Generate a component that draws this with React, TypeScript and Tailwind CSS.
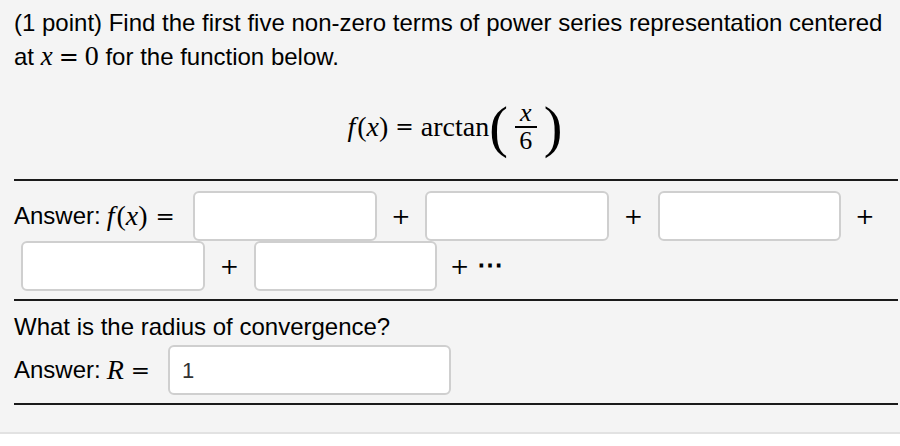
const sans = "font-['Liberation_Sans',Arial,sans-serif]";
const serif = "font-['Liberation_Serif','Times_New_Roman',serif]";
const op = "font-['DejaVu_Serif',serif]";

function Box({ w, value }: { w: string; value?: string }) {
  return (
    <div
      className={`${w} flex h-[50px] items-center rounded-[6px] border-2 border-[#cfcfcf] bg-white px-[12px] text-[22px] text-[#333]`}
    >
      {value}
    </div>
  );
}

function Plus({ w = "w-[48px]" }: { w?: string }) {
  return (
    <span className={`${w} ${op} flex justify-center text-[23px] leading-none`}>+</span>
  );
}

function Rule() {
  return <div className="mr-[2px] h-[2px] bg-[#1a1a1a]" />;
}

export default function App() {
  return (
    <div className={`${sans} w-[900px] bg-white text-black`}>
      <div className="border-b-2 border-[#e2e2e2] bg-[#f4f4f4] pl-[14px]">
        <p className="pt-[6px] text-[24px] leading-[34px]">
          (1 point) Find the first five non-zero terms of power series representation centered
          <br />
          at <i className={`${serif} text-[27px] leading-none`}>x</i>
          <span className={`${op} mx-[6px] text-[24px] leading-none`}>=</span>
          <span className={`${serif} text-[28px] leading-none`}>0</span> for the function below.
        </p>

        <div className={`${serif} flex h-[105px] items-center justify-center pr-[4px] text-[28px]`}>
          <i>f</i>
          <span className="ml-[2px]">(</span>
          <i>x</i>)<span className={`${op} mx-[7px] text-[22px]`}>=</span>arctan
          <span className="flex items-center">
            <span className="text-[56px] font-light leading-none">(</span>
            <span className="mx-[7px] flex flex-col items-center text-[26px] leading-[26px]">
              <i className="px-[2px]">x</i>
              <span className="h-[2px] w-[22px] bg-black" />
              <span>6</span>
            </span>
            <span className="text-[56px] font-light leading-none">)</span>
          </span>
        </div>

        <Rule />

        <div className="pb-[8px] pt-[10px] text-[24px]">
          <div className="flex items-center">
            <span className="w-[179px] flex items-center">
              Answer:
              <span className={`${serif} ml-[6px] text-[28px]`}>
                <i>f</i>
                <span className="ml-[2px]">(</span>
                <i>x</i>)
              </span>
              <span className={`${op} ml-[8px] text-[23px]`}>=</span>
            </span>
            <Box w="w-[184px]" />
            <Plus />
            <Box w="w-[184px]" />
            <Plus w="w-[49px]" />
            <Box w="w-[183px]" />
            <Plus />
          </div>
          <div className="ml-[7px] flex items-center">
            <Box w="w-[184px]" />
            <Plus w="w-[49px]" />
            <Box w="w-[183px]" />
            <span className={`${op} ml-[13px] text-[23px] leading-none`}>+</span>
            <span className={`${serif} ml-[8px] text-[26px] font-bold leading-none`}>⋯</span>
          </div>
        </div>

        <Rule />

        <p className="pt-[11px] text-[24px] leading-[30px]">What is the radius of convergence?</p>

        <div className="flex items-center pb-[8px] pt-[3px] text-[24px]">
          <span className="flex w-[154px] items-center">
            Answer:
            <i className={`${serif} ml-[6px] text-[28px]`}>R</i>
            <span className={`${op} ml-[7px] text-[23px]`}>=</span>
          </span>
          <Box w="w-[283px]" value="1" />
        </div>

        <Rule />

        <div className="h-[27px]" />
      </div>
    </div>
  );
}
